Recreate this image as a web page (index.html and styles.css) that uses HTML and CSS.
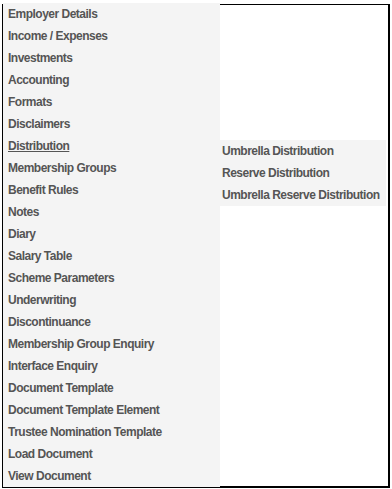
FILE: index.html
```html
<!DOCTYPE html>
<html>
<head>
<meta charset="utf-8">
<link rel="stylesheet" href="styles.css">
</head>
<body>
<div class="frame">
  <ul class="menu">
    <li><a>Employer Details</a></li>
    <li><a>Income / Expenses</a></li>
    <li><a>Investments</a></li>
    <li><a>Accounting</a></li>
    <li><a>Formats</a></li>
    <li><a>Disclaimers</a></li>
    <li class="has-sub"><a class="hover">Distribution</a>
      <ul class="submenu">
        <li><a>Umbrella Distribution</a></li>
        <li><a>Reserve Distribution</a></li>
        <li><a>Umbrella Reserve Distribution</a></li>
      </ul>
    </li>
    <li><a>Membership Groups</a></li>
    <li><a>Benefit Rules</a></li>
    <li><a>Notes</a></li>
    <li><a>Diary</a></li>
    <li><a>Salary Table</a></li>
    <li><a>Scheme Parameters</a></li>
    <li><a>Underwriting</a></li>
    <li><a>Discontinuance</a></li>
    <li><a>Membership Group Enquiry</a></li>
    <li><a>Interface Enquiry</a></li>
    <li><a>Document Template</a></li>
    <li><a>Document Template Element</a></li>
    <li><a>Trustee Nomination Template</a></li>
    <li><a>Load Document</a></li>
    <li><a>View Document</a></li>
  </ul>
</div>
</body>
</html>
```
FILE: styles.css
```css
html, body {
  margin: 0;
  padding: 0;
  background: #fff;
}
body {
  font-family: "Liberation Sans", Arial, sans-serif;
  font-size: 12px;
  font-weight: bold;
  letter-spacing: -0.5px;
  color: #555;
}
.frame {
  margin: 4px 0 0 2px;
  width: 385px;
  height: 481px;
  border: 1px solid #000;
  border-right-width: 2px;
  border-bottom-width: 2px;
  background: #fff;
  position: relative;
}
.menu {
  list-style: none;
  margin: -2px 0 0 0;
  padding: 0;
  width: 217px;
  background: #f4f4f4;
}
.menu li {
  height: 22px;
  line-height: 22px;
  padding-left: 5px;
  white-space: nowrap;
}
.menu a {
  color: #555;
}
.menu a.hover {
  text-decoration: underline;
}
.has-sub {
  position: relative;
}
.submenu {
  list-style: none;
  margin: 0;
  padding: 0;
  position: absolute;
  left: 217px;
  top: 5px;
  width: 166px;
  background: #f4f4f4;
}
.submenu li {
  padding-left: 2px;
}
```
